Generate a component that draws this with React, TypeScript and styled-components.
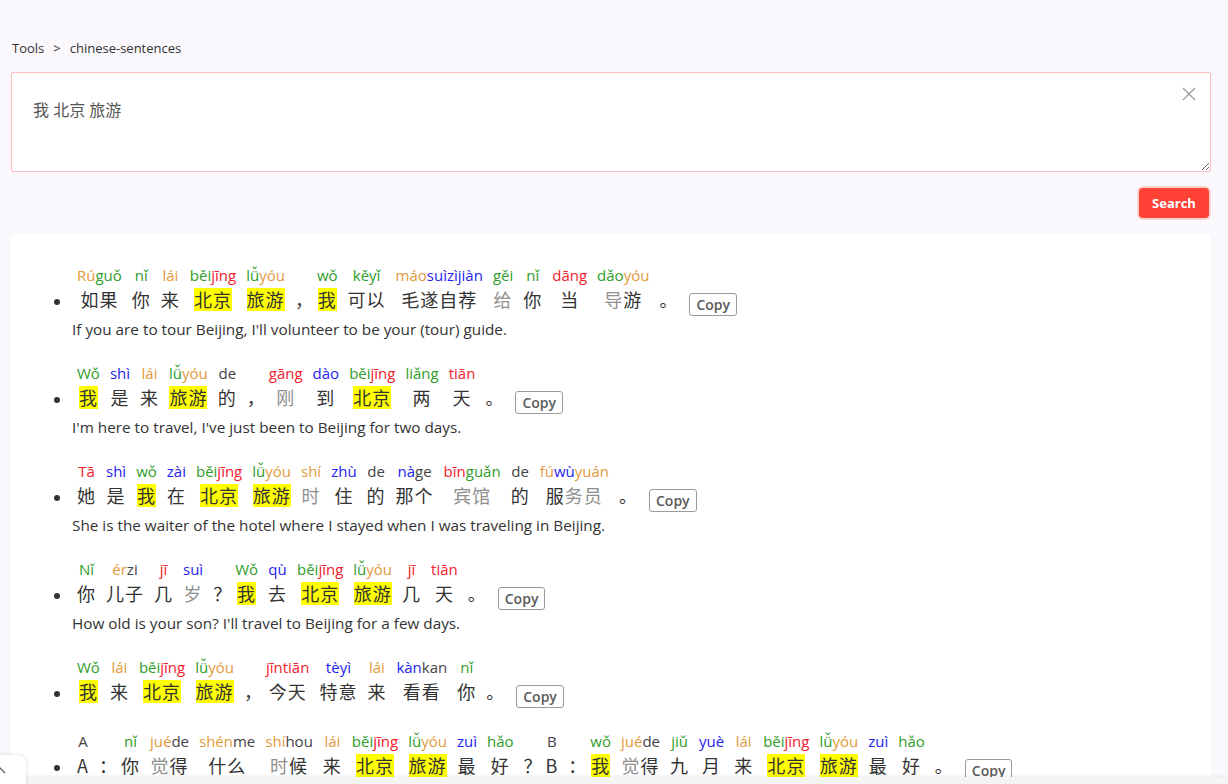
import React from 'react'
import styled, { createGlobalStyle } from 'styled-components'

const GlobalStyle = createGlobalStyle`
  body {
    margin: 0;
    background: #faf8fc;
    color: #333;
    font-family: "Open Sans", "Noto Sans", "Noto Sans CJK SC", sans-serif;
  }
`

const toneColors: Record<number, string> = {
  1: '#f3202c',
  2: '#e29a3c',
  3: '#2f9d2a',
  4: '#2323ef',
  5: '#444444',
}

type Opts = { hl?: boolean; soft?: string }
type Tok = [string, string?, Opts?]

interface Sentence {
  tokens: Tok[]
  en?: string
}

const H = { hl: true }

const sentences: Sentence[] = [
  {
    tokens: [
      ['如果', 'Rú2guǒ3'], ['你', 'nǐ3'], ['来', 'lái2'], ['北京', 'běi3jīng1', H], ['旅游', 'lǚ3yóu2', H],
      ['，'], ['我', 'wǒ3', H], ['可以', 'kě3yǐ3'], ['毛遂自荐', 'máo2suì4zì4jiàn4'], ['给', 'gěi3', { soft: '给' }],
      ['你', 'nǐ3'], ['当', 'dāng1'], ['导游', 'dǎo3yóu2', { soft: '导' }], ['。'],
    ],
    en: "If you are to tour Beijing, I'll volunteer to be your (tour) guide.",
  },
  {
    tokens: [
      ['我', 'Wǒ3', H], ['是', 'shì4'], ['来', 'lái2'], ['旅游', 'lǚ3yóu2', H], ['的', 'de5'], ['，'],
      ['刚', 'gāng1', { soft: '刚' }], ['到', 'dào4'], ['北京', 'běi3jīng1', H], ['两', 'liǎng3'], ['天', 'tiān1'], ['。'],
    ],
    en: "I'm here to travel, I've just been to Beijing for two days.",
  },
  {
    tokens: [
      ['她', 'Tā1'], ['是', 'shì4'], ['我', 'wǒ3', H], ['在', 'zài4'], ['北京', 'běi3jīng1', H], ['旅游', 'lǚ3yóu2', H],
      ['时', 'shí2', { soft: '时' }], ['住', 'zhù4'], ['的', 'de5'], ['那个', 'nà4ge5'], ['宾馆', 'bīn1guǎn3', { soft: '宾馆' }],
      ['的', 'de5'], ['服务员', 'fú2wù4yuán2', { soft: '务员' }], ['。'],
    ],
    en: 'She is the waiter of the hotel where I stayed when I was traveling in Beijing.',
  },
  {
    tokens: [
      ['你', 'Nǐ3'], ['儿子', 'ér2zi5'], ['几', 'jī1'], ['岁', 'suì4', { soft: '岁' }], ['？'], ['我', 'Wǒ3', H],
      ['去', 'qù4'], ['北京', 'běi3jīng1', H], ['旅游', 'lǚ3yóu2', H], ['几', 'jī1'], ['天', 'tiān1'], ['。'],
    ],
    en: "How old is your son? I'll travel to Beijing for a few days.",
  },
  {
    tokens: [
      ['我', 'Wǒ3', H], ['来', 'lái2'], ['北京', 'běi3jīng1', H], ['旅游', 'lǚ3yóu2', H], ['，'], ['今天', 'jīn1tiān1'],
      ['特意', 'tè4yì4'], ['来', 'lái2'], ['看看', 'kàn4kan5'], ['你', 'nǐ3'], ['。'],
    ],
  },
  {
    tokens: [
      ['A', 'A5'], ['：'], ['你', 'nǐ3'], ['觉得', 'jué2de5', { soft: '觉' }], ['什么', 'shén2me5'], ['时候', 'shí2hou5', { soft: '时' }],
      ['来', 'lái2'], ['北京', 'běi3jīng1', H], ['旅游', 'lǚ3yóu2', H], ['最', 'zuì4'], ['好', 'hǎo3'], ['？'],
      ['B', 'B5'], ['：'], ['我', 'wǒ3', H], ['觉得', 'jué2de5', { soft: '觉' }], ['九', 'jiǔ3'], ['月', 'yuè4'], ['来', 'lái2'],
      ['北京', 'běi3jīng1', H], ['旅游', 'lǚ3yóu2', H], ['最', 'zuì4'], ['好', 'hǎo3'], ['。'],
    ],
    en: 'A: When do you think is the best time to travel to Beijing? B: I think September is the best time to travel to Beijing.',
  },
]

const parsePinyin = (s: string) => {
  const out: { text: string; tone: number }[] = []
  s.replace(/([^\d]+)(\d)/g, (_m, t: string, n: string) => {
    out.push({ text: t, tone: Number(n) })
    return ''
  })
  return out
}

const Page = styled.div`
  max-width: 1200px;
  margin-left: 11px;
  padding-top: 40px;
`

const Breadcrumb = styled.nav`
  font-size: 13px;
  line-height: 16px;
  color: #333;
  padding-left: 1px;
`

const Sep = styled.span`
  margin: 0 9px;
`

const SearchBox = styled.div`
  position: relative;
  margin-top: 16px;
`

const Input = styled.textarea`
  display: block;
  box-sizing: border-box;
  width: 100%;
  height: 100px;
  padding: 27px 21px;
  border: 1px solid #ffbcbc;
  border-radius: 2px;
  background: #fff;
  color: #555;
  font-family: "Open Sans", "Noto Sans CJK SC", sans-serif;
  font-size: 16px;
  line-height: 20px;
  outline: none;
`

const ClearButton = styled.button`
  position: absolute;
  top: 14px;
  right: 14px;
  width: 16px;
  height: 16px;
  padding: 0;
  border: 0;
  background: none;
  cursor: pointer;
  display: flex;
  align-items: center;
  justify-content: center;
`

const Actions = styled.div`
  display: flex;
  justify-content: flex-end;
  margin-top: 16px;
  padding-right: 2px;
`

const SearchButton = styled.button`
  width: 70px;
  height: 30px;
  border: 0;
  border-radius: 4px;
  background: #ff4136;
  box-shadow: 0 0 0 2px #fbd3cf;
  color: #fff;
  font-family: "Open Sans", sans-serif;
  font-size: 13px;
  font-weight: 700;
  cursor: pointer;
`

const ResultCard = styled.section`
  margin-top: 16px;
  padding: 15px 20px 20px;
  background: #fff;
  border-radius: 4px;
`

const SentenceList = styled.ul`
  margin: 16px 0;
  padding-left: 41px;
`

const SentenceItem = styled.li`
  margin-bottom: 22px;
  color: #333;
`

const WordCol = styled.span<{ $punct?: boolean }>`
  display: inline-block;
  margin: ${p => (p.$punct ? '0 -2px 0 5px' : '0 5px')};
  text-align: ${p => (p.$punct ? 'left' : 'center')};
`

const PinyinRow = styled.span`
  display: block;
  height: 20px;
  font-size: 15px;
  line-height: 20px;
  white-space: nowrap;
`

const Syllable = styled.span<{ $tone: number }>`
  color: ${p => toneColors[p.$tone]};
`

const HanziRow = styled.span`
  display: block;
  line-height: 32px;
`

const Hanzi = styled.span<{ $hl?: boolean }>`
  display: inline-block;
  font-family: "Noto Sans CJK SC", sans-serif;
  font-size: 18px;
  line-height: 23px;
  letter-spacing: 1px;
  background: ${p => (p.$hl ? '#ffff00' : 'transparent')};
  color: #333;
`

const Char = styled.span<{ $soft?: boolean }>`
  color: ${p => (p.$soft ? '#8f8f8f' : 'inherit')};
`

const CopyButton = styled.button`
  margin-left: 13px;
  height: 23px;
  padding: 0 6px;
  border: 1px solid #9a9a9a;
  border-radius: 3px;
  background: #fff;
  color: #5a5a5a;
  font-family: "Open Sans", sans-serif;
  font-size: 14px;
  font-weight: 600;
  vertical-align: -3px;
  cursor: pointer;
`

const Translation = styled.div`
  font-size: 15.3px;
  line-height: 24px;
  color: #333;
`

const BottomBar = styled.div`
  position: fixed;
  left: 0;
  right: 0;
  bottom: 0;
  height: 7px;
  background: #f4f4f4;
  box-shadow: 0 -1px 3px rgba(0, 0, 0, 0.08);
`

const TopTab = styled.button`
  position: fixed;
  left: -26px;
  bottom: 0;
  width: 52px;
  height: 29px;
  padding: 0;
  border: 0;
  border-radius: 0 8px 0 0;
  background: #fff;
  box-shadow: 0 0 4px rgba(0, 0, 0, 0.15);
  display: flex;
  align-items: center;
  justify-content: center;
`

const Word = ({ tok }: { tok: Tok }) => {
  const [hz, py, opts] = tok
  const syllables = py ? parsePinyin(py) : []
  return (
    <WordCol $punct={!py}>
      <PinyinRow>
        {syllables.length
          ? syllables.map((s, i) => (
              <Syllable key={i} $tone={s.tone}>
                {s.text}
              </Syllable>
            ))
          : '\u00a0'}
      </PinyinRow>
      <HanziRow>
        <Hanzi $hl={opts?.hl}>
          {Array.from(hz).map((ch, i) => (
            <Char key={i} $soft={!!opts?.soft && opts.soft.includes(ch)}>
              {ch}
            </Char>
          ))}
        </Hanzi>
      </HanziRow>
    </WordCol>
  )
}

const App = () => {
  return (
    <>
      <GlobalStyle />
      <Page>
        <Breadcrumb>
          <span>Tools</span>
          <Sep>&gt;</Sep>
          <span>chinese-sentences</span>
        </Breadcrumb>
        <SearchBox>
          <Input defaultValue="我 北京 旅游" />
          <ClearButton aria-label="clear">
            <svg width="14" height="14" viewBox="0 0 14 14">
              <path d="M1 1L13 13M13 1L1 13" stroke="#9a9a9a" strokeWidth="1.3" fill="none" />
            </svg>
          </ClearButton>
        </SearchBox>
        <Actions>
          <SearchButton>Search</SearchButton>
        </Actions>
        <ResultCard>
          <SentenceList>
            {sentences.map((s, idx) => (
              <SentenceItem key={idx}>
                <div>
                  {s.tokens.map((t, i) => (
                    <Word key={i} tok={t} />
                  ))}
                  <CopyButton>Copy</CopyButton>
                </div>
                {s.en && <Translation>{s.en}</Translation>}
              </SentenceItem>
            ))}
          </SentenceList>
        </ResultCard>
      </Page>
      <BottomBar />
      <TopTab aria-label="back to top">
        <svg width="12" height="8" viewBox="0 0 12 8">
          <path d="M1 7L6 2L11 7" stroke="#666" strokeWidth="1.4" fill="none" />
        </svg>
      </TopTab>
    </>
  )
}

export default App
